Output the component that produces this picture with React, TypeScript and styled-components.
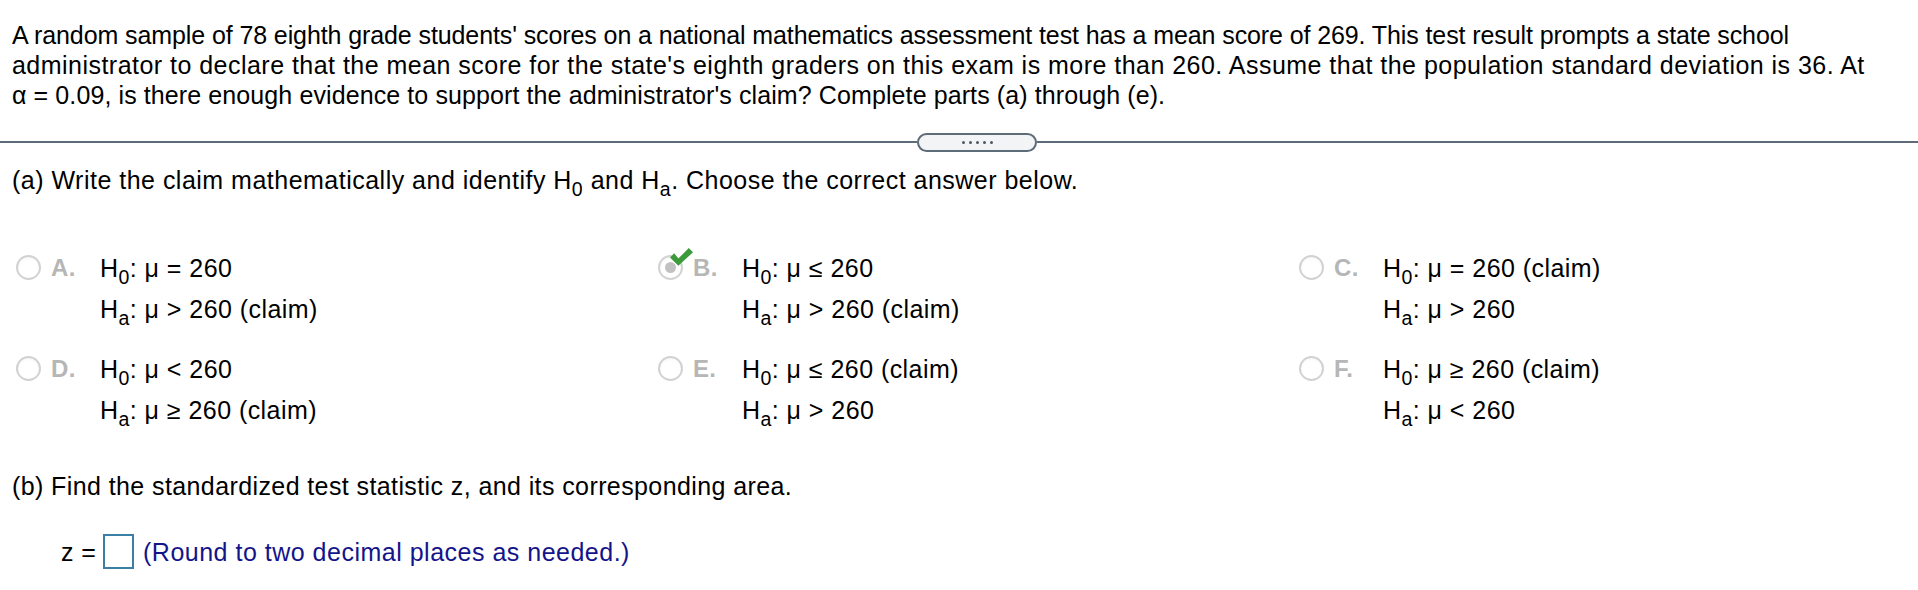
import React from "react";
import styled, { createGlobalStyle } from "styled-components";

const GlobalStyle = createGlobalStyle`
  html, body { margin: 0; padding: 0; background: #ffffff; }
  body {
    font-family: "Liberation Sans", Arial, Helvetica, sans-serif;
    color: #000;
    width: 1918px;
    overflow: hidden;
    letter-spacing: 0.45px;
  }
`;

const Page = styled.div`
  display: flex;
  flex-direction: column;
  width: 1918px;
  height: 590px;
`;

const Question = styled.div`
  display: flex;
  flex-direction: column;
  padding: 20px 12px 0;
  font-size: 25px;
  line-height: 30px;
  white-space: nowrap;
`;

const QuestionLine = styled.span<{ $ls: number }>`
  letter-spacing: ${(p) => p.$ls}px;
`;

const Divider = styled.div`
  display: flex;
  align-items: center;
  margin-top: 22px;
  height: 20px;
`;

const Rule = styled.div<{ $w?: number }>`
  height: 2px;
  background: #5e6b79;
  ${(p) => (p.$w ? `width: ${p.$w}px; flex: none;` : "flex: 1;")}
`;

const ExpandButton = styled.button`
  flex: none;
  width: 120px;
  height: 19px;
  box-sizing: border-box;
  border: 2px solid #5e6b79;
  border-radius: 10px;
  background: #f3f4f6;
  display: flex;
  align-items: center;
  justify-content: center;
  gap: 4px;
  padding: 0;
`;

const Dot = styled.span`
  width: 3px;
  height: 3px;
  border-radius: 50%;
  background: #4d5864;
`;

const Prompt = styled.p<{ $top: number; $ls: number }>`
  margin: ${(p) => p.$top}px 0 0;
  padding: 0 12px;
  font-size: 25px;
  line-height: 30px;
  white-space: nowrap;
  letter-spacing: ${(p) => p.$ls}px;
`;

const Sub = styled.sub`
  font-size: 0.78em;
  vertical-align: baseline;
  position: relative;
  top: 0.34em;
  line-height: 0;
`;

const OptionsGrid = styled.div`
  display: grid;
  grid-template-columns: 642px 641px 1fr;
  row-gap: 30px;
  margin-top: 58px;
  padding-left: 16px;
`;

const Option = styled.div`
  display: flex;
  align-items: flex-start;
`;

const RadioWrap = styled.div`
  position: relative;
  flex: none;
  width: 25px;
  height: 25px;
  margin-top: 2px;
`;

const RadioCircle = styled.div<{ $checked?: boolean }>`
  width: 25px;
  height: 25px;
  box-sizing: border-box;
  border-radius: 50%;
  border: 2px solid #d2d2d2;
  background: radial-gradient(circle at 50% 60%, #ffffff 55%, #f1f1f1 100%);
  display: flex;
  align-items: center;
  justify-content: center;
  &::after {
    content: "";
    display: ${(p) => (p.$checked ? "block" : "none")};
    width: 11px;
    height: 11px;
    border-radius: 50%;
    background: #c2c2c2;
  }
`;

const Check = styled.svg`
  position: absolute;
  left: 12px;
  top: -7px;
  width: 23px;
  height: 19px;
`;

const Letter = styled.span`
  flex: none;
  width: 59px;
  padding-left: 10px;
  box-sizing: border-box;
  font-weight: bold;
  color: #b6b6b6;
  font-size: 24px;
  line-height: 30px;
  letter-spacing: 0.3px;
`;

const Hyp = styled.div`
  display: flex;
  flex-direction: column;
  font-size: 25px;
  line-height: 30px;
  row-gap: 11px;
  white-space: nowrap;
`;

const AnswerRow = styled.div`
  display: flex;
  align-items: center;
  margin-top: 33px;
  padding-left: 61px;
  font-size: 25px;
  line-height: 30px;
`;

const Eq = styled.span`
  flex: none;
  width: 42px;
`;

const AnswerBox = styled.span`
  flex: none;
  width: 31px;
  height: 35px;
  box-sizing: border-box;
  border: 2px solid #3c7fa6;
  margin-right: 9px;
`;

const Hint = styled.span`
  color: #14148a;
  letter-spacing: 0.5px;
`;

type Opt = { key: string; h0: string; ha: string; checked?: boolean };

const options: Opt[] = [
  { key: "A", h0: "\u03bc = 260", ha: "\u03bc > 260 (claim)" },
  { key: "B", h0: "\u03bc \u2264 260", ha: "\u03bc > 260 (claim)", checked: true },
  { key: "C", h0: "\u03bc = 260 (claim)", ha: "\u03bc > 260" },
  { key: "D", h0: "\u03bc < 260", ha: "\u03bc \u2265 260 (claim)" },
  { key: "E", h0: "\u03bc \u2264 260 (claim)", ha: "\u03bc > 260" },
  { key: "F", h0: "\u03bc \u2265 260 (claim)", ha: "\u03bc < 260" },
];

export default function App() {
  return (
    <Page>
      <GlobalStyle />
      <Question>
        <QuestionLine $ls={-0.1}>
          A random sample of 78 eighth grade students' scores on a national mathematics assessment test has a mean
          score of 269. This test result prompts a state school
        </QuestionLine>
        <QuestionLine $ls={0.47}>
          administrator to declare that the mean score for the state's eighth graders on this exam is more than 260.
          Assume that the population standard deviation is 36. At
        </QuestionLine>
        <QuestionLine $ls={0.1}>
          {"\u03b1 = 0.09, is there enough evidence to support the administrator's claim? Complete parts (a) through (e)."}
        </QuestionLine>
      </Question>
      <Divider>
        <Rule $w={917} />
        <ExpandButton aria-label="expand">
          <Dot />
          <Dot />
          <Dot />
          <Dot />
          <Dot />
        </ExpandButton>
        <Rule />
      </Divider>
      <Prompt $top={13} $ls={0.49}>
        (a) Write the claim mathematically and identify H<Sub>0</Sub> and H<Sub>a</Sub>. Choose the correct answer
        below.
      </Prompt>
      <OptionsGrid>
        {options.map((o) => (
          <Option key={o.key}>
            <RadioWrap>
              <RadioCircle $checked={o.checked} />
              {o.checked && (
                <Check viewBox="0 0 22 18">
                  <polygon points="0,9 4,5 8,10 18,0 22,4 8,17" fill="#3d9a3a" />
                </Check>
              )}
            </RadioWrap>
            <Letter>{o.key}.</Letter>
            <Hyp>
              <span>
                H<Sub>0</Sub>: {o.h0}
              </span>
              <span>
                H<Sub>a</Sub>: {o.ha}
              </span>
            </Hyp>
          </Option>
        ))}
      </OptionsGrid>
      <Prompt $top={46} $ls={0.4}>
        (b) Find the standardized test statistic z, and its corresponding area.
      </Prompt>
      <AnswerRow>
        <Eq>z =</Eq>
        <AnswerBox />
        <Hint>(Round to two decimal places as needed.)</Hint>
      </AnswerRow>
    </Page>
  );
}
